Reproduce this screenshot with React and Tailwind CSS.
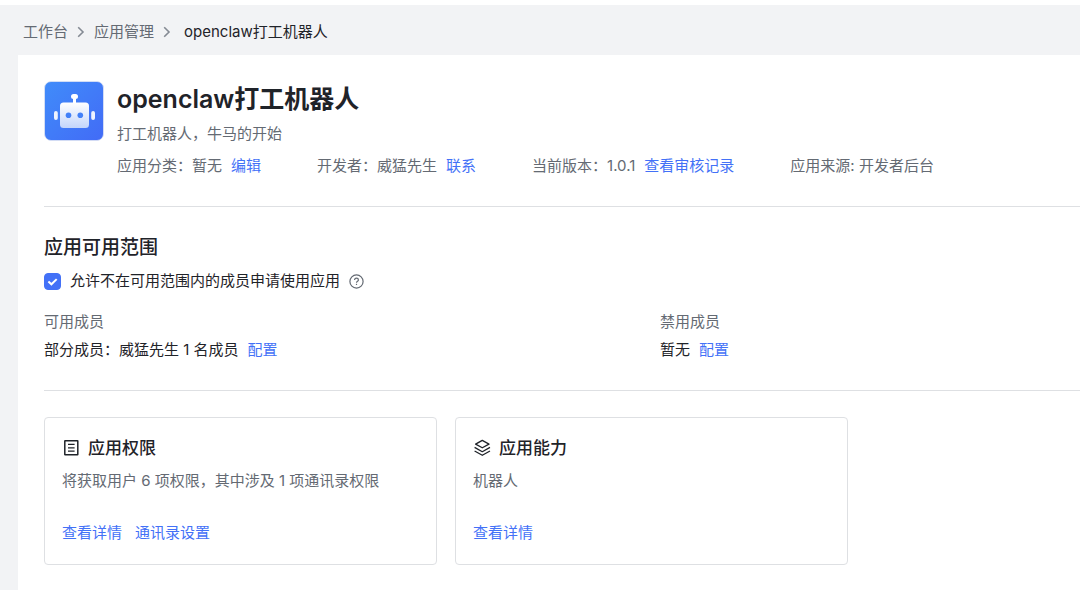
import { useState } from "react";

function TextLink({ children, className = "" }) {
  return (
    <a href="#" className={`text-[#4371f7] hover:underline ${className}`}>
      {children}
    </a>
  );
}

function Crumb() {
  return (
    <svg viewBox="0 0 12 12" className="size-3 text-[#848a93]" fill="none" stroke="currentColor" strokeWidth="1.6" aria-hidden="true">
      <path d="M3.2 1.3 8 6 3.2 10.7" />
    </svg>
  );
}

function RobotLogo() {
  return (
    <svg viewBox="0 0 60 60" className="size-[60px] shrink-0" role="img" aria-label="openclaw打工机器人">
      <defs>
        <linearGradient id="tile" x1="0" y1="0" x2="1" y2="1">
          <stop offset="0" stopColor="#408cfa" />
          <stop offset="1" stopColor="#426bf6" />
        </linearGradient>
        <linearGradient id="head" x1="0" y1="0" x2="0" y2="1">
          <stop offset="0" stopColor="#ffffff" />
          <stop offset="1" stopColor="#c3d5fb" />
        </linearGradient>
      </defs>
      <rect x="0.5" y="0.5" width="59" height="59" rx="6.5" fill="url(#tile)" stroke="#dfe5f2" strokeWidth="0.8" />
      <rect x="27" y="13" width="7" height="5" rx="2.5" fill="#fff" />
      <rect x="29" y="15" width="3" height="8" fill="#fff" />
      <rect x="16" y="21.5" width="29" height="25.5" rx="3.5" fill="url(#head)" />
      <rect x="10" y="30" width="3.8" height="9" rx="1.9" fill="#eef3fe" />
      <rect x="47.2" y="30" width="3.8" height="9" rx="1.9" fill="#eef3fe" />
      <circle cx="24.5" cy="34.3" r="2.8" fill="#4280f8" />
      <circle cx="36.3" cy="34.3" r="2.8" fill="#4280f8" />
    </svg>
  );
}

function ListIcon() {
  return (
    <svg viewBox="0 0 18 18" className="size-[18px]" fill="none" stroke="currentColor" strokeWidth="1.5" aria-hidden="true">
      <rect x="2.8" y="1.8" width="13" height="14" rx="0.3" />
      <path d="M6 5.4h6.6M6 8.8h6.6M6 12.2h6.6" strokeWidth="1.3" />
    </svg>
  );
}

function LayersIcon() {
  return (
    <svg viewBox="0 0 18 18" className="size-[18px]" fill="none" stroke="currentColor" strokeWidth="1.3" strokeLinejoin="round" aria-hidden="true">
      <path d="M9.3 1.4 16 5.1 9.3 8.8 2.6 5.1Z" />
      <path d="M1.6 8.4 9.3 12.7 17 8.4M1.6 12 9.3 16.3 17 12" />
    </svg>
  );
}

function Card({ icon, title, text, links }) {
  return (
    <article className="w-[393px] rounded border border-[#dee0e3] px-[17px] pt-[18px] pb-[19px]">
      <h3 className="flex items-center gap-2 text-[17px] leading-6 font-medium text-[#1f2329]">
        {icon}
        {title}
      </h3>
      <p className="mt-[9px] text-[#646a73]">{text}</p>
      <div className="mt-7 flex gap-[13px]">
        {links.map((l) => (
          <TextLink key={l}>{l}</TextLink>
        ))}
      </div>
    </article>
  );
}

export default function App() {
  const [allow, setAllow] = useState(true);
  return (
    <div className="min-h-screen overflow-x-hidden bg-white pt-[5px] font-['Inter','Noto_Sans_CJK_SC',sans-serif] text-[15px] leading-6 text-[#1f2329]">
      <div className="bg-[#f2f3f5] pl-[18px]">
        <nav aria-label="面包屑" className="flex h-[50px] items-center gap-[7px] pl-[5px] pt-1 text-[#646a73]">
          <a href="#">工作台</a>
          <Crumb />
          <a href="#">应用管理</a>
          <Crumb />
          <span className="pl-1 text-[#1f2329]">openclaw打工机器人</span>
        </nav>

        <main className="min-h-[calc(100vh-55px)] bg-white pt-[26px] pb-6 pl-[26px]">
          <header className="flex gap-[13px] border-b border-[#dee0e3] pb-7 text-[#646a73]">
            <RobotLogo />
            <div>
              <h1 className="text-[25px] leading-9 font-semibold text-[#1f2329]">openclaw打工机器人</h1>
              <p className="mt-[5px]">打工机器人，牛马的开始</p>
              <div className="mt-2 flex gap-14 whitespace-nowrap">
                <div>应用分类：暂无<TextLink className="ml-[9px]">编辑</TextLink></div>
                <div>开发者：威猛先生<TextLink className="ml-[9px]">联系</TextLink></div>
                <div>当前版本：1.0.1<TextLink className="ml-[9px]">查看审核记录</TextLink></div>
                <div>应用来源: 开发者后台</div>
              </div>
            </div>
          </header>

          <section className="border-b border-[#dee0e3] pt-[27px] pb-7">
            <h2 className="text-[19px] leading-7 font-medium">应用可用范围</h2>
            <div className="mt-[7px] flex items-center gap-[9px]">
              <label className="flex items-center gap-[9px]">
                <span className="grid size-[17px] place-items-center">
                  <input
                    type="checkbox"
                    checked={allow}
                    onChange={(e) => setAllow(e.target.checked)}
                    className="peer col-start-1 row-start-1 size-[17px] appearance-none rounded border border-[#8f959e] checked:border-[#4371f7] checked:bg-[#4371f7]"
                  />
                  <svg viewBox="0 0 17 17" className="pointer-events-none invisible col-start-1 row-start-1 size-[17px] peer-checked:visible" fill="none" stroke="#fff" strokeWidth="2" aria-hidden="true">
                    <path d="m4.4 8.5 3 2.8 5.3-5.2" />
                  </svg>
                </span>
                允许不在可用范围内的成员申请使用应用
              </label>
              <button type="button" aria-label="帮助" className="text-[#646a73]">
                <svg viewBox="0 0 15 15" className="size-[15px]" fill="none" stroke="currentColor" strokeWidth="1.2" aria-hidden="true">
                  <circle cx="7.5" cy="7.5" r="6.6" />
                  <path d="M5.6 6.1c0-1.2.8-1.9 1.9-1.9s1.9.7 1.9 1.7c0 1.3-1.9 1.5-1.9 2.9" />
                  <path d="M7.5 9.8v1.2" />
                </svg>
              </button>
            </div>
            <div className="mt-[17px] grid grid-cols-[616fr_420fr]">
              <div>
                <h4 className="text-[#646a73]">可用成员</h4>
                <p className="mt-1">部分成员：威猛先生 1 名成员<TextLink className="ml-[9px]">配置</TextLink></p>
              </div>
              <div>
                <h4 className="text-[#646a73]">禁用成员</h4>
                <p className="mt-1">暂无<TextLink className="ml-[9px]">配置</TextLink></p>
              </div>
            </div>
          </section>

          <section className="mt-[26px] flex flex-wrap gap-[18px]">
            <Card
              icon={<ListIcon />}
              title="应用权限"
              text="将获取用户 6 项权限，其中涉及 1 项通讯录权限"
              links={["查看详情", "通讯录设置"]}
            />
            <Card icon={<LayersIcon />} title="应用能力" text="机器人" links={["查看详情"]} />
          </section>
        </main>
      </div>
    </div>
  );
}
